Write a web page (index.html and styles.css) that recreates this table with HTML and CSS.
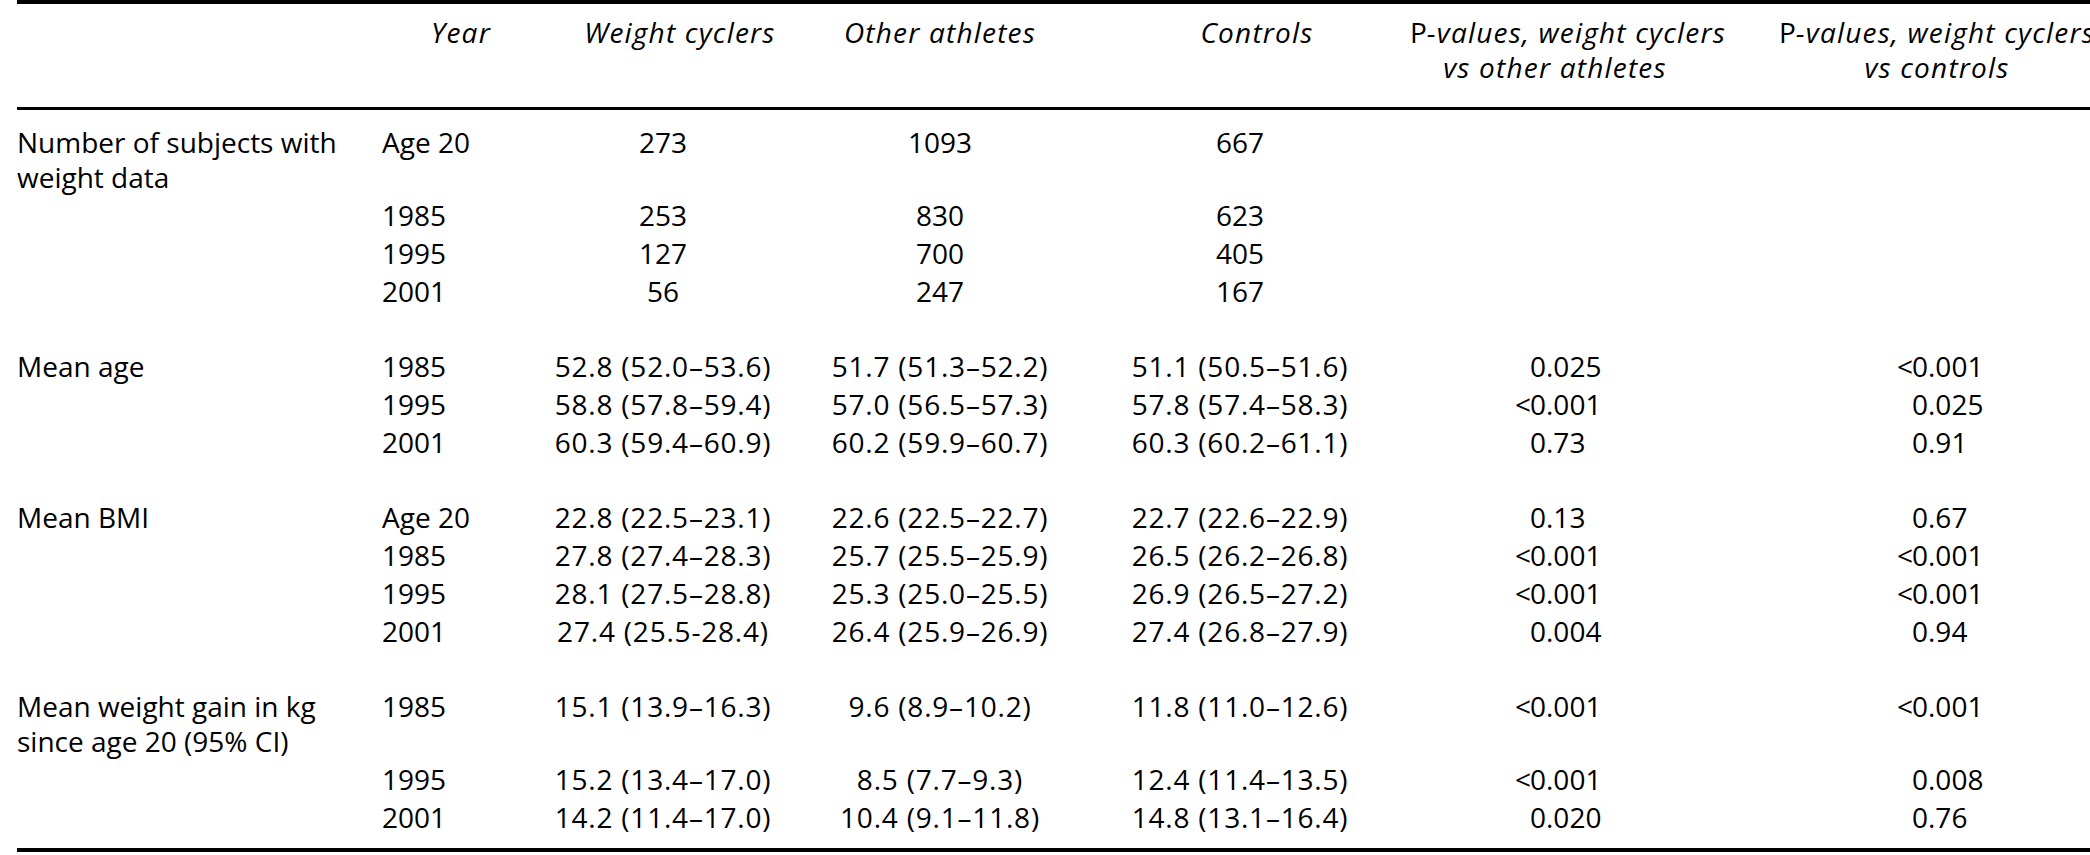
FILE: index.html
```html
<!DOCTYPE html>
<html lang="en">
<head>
<meta charset="utf-8">
<title>Weight cyclers table</title>
<link rel="stylesheet" href="styles.css">
</head>
<body>
<table class="tbl">
  <colgroup>
    <col class="w-label">
    <col class="w-year">
    <col class="w-wc">
    <col class="w-oa">
    <col class="w-ct">
    <col class="w-p5">
    <col class="w-p6">
  </colgroup>
  <thead>
    <tr>
      <th class="h-label"></th>
      <th class="h-c"><i>Year</i></th>
      <th class="h-c"><i>Weight cyclers</i></th>
      <th class="h-c"><i>Other athletes</i></th>
      <th class="h-c h-ct"><i>Controls</i></th>
      <th class="h-c">P<i>-values, weight cyclers</i><br><i>vs other athletes</i></th>
      <th class="h-c h-p6">P<i>-values, weight cyclers</i><br><i>vs controls</i></th>
    </tr>
  </thead>
  <tbody>
    <tr class="first">
      <td class="lab">Number of subjects with weight data</td>
      <td class="yr">Age 20</td><td class="wc">273</td><td class="oa">1093</td><td class="ct">667</td><td class="p5"></td><td class="p6"></td>
    </tr>
    <tr>
      <td class="lab"></td><td class="yr">1985</td><td class="wc">253</td><td class="oa">830</td><td class="ct">623</td><td class="p5"></td><td class="p6"></td>
    </tr>
    <tr>
      <td class="lab"></td><td class="yr">1995</td><td class="wc">127</td><td class="oa">700</td><td class="ct">405</td><td class="p5"></td><td class="p6"></td>
    </tr>
    <tr>
      <td class="lab"></td><td class="yr">2001</td><td class="wc">56</td><td class="oa">247</td><td class="ct">167</td><td class="p5"></td><td class="p6"></td>
    </tr>

    <tr class="grp">
      <td class="lab">Mean age</td>
      <td class="yr">1985</td><td class="wc rng">52.8 (52.0–53.6)</td><td class="oa rng">51.7 (51.3–52.2)</td><td class="ct rng">51.1 (50.5–51.6)</td>
      <td class="p5">0.025</td><td class="p6"><span class="lt">&lt;</span>0.001</td>
    </tr>
    <tr>
      <td class="lab"></td><td class="yr">1995</td><td class="wc rng">58.8 (57.8–59.4)</td><td class="oa rng">57.0 (56.5–57.3)</td><td class="ct rng">57.8 (57.4–58.3)</td>
      <td class="p5"><span class="lt">&lt;</span>0.001</td><td class="p6">0.025</td>
    </tr>
    <tr>
      <td class="lab"></td><td class="yr">2001</td><td class="wc rng">60.3 (59.4–60.9)</td><td class="oa rng">60.2 (59.9–60.7)</td><td class="ct rng">60.3 (60.2–61.1)</td>
      <td class="p5">0.73</td><td class="p6">0.91</td>
    </tr>

    <tr class="grp">
      <td class="lab">Mean BMI</td>
      <td class="yr">Age 20</td><td class="wc rng">22.8 (22.5–23.1)</td><td class="oa rng">22.6 (22.5–22.7)</td><td class="ct rng">22.7 (22.6–22.9)</td>
      <td class="p5">0.13</td><td class="p6">0.67</td>
    </tr>
    <tr>
      <td class="lab"></td><td class="yr">1985</td><td class="wc rng">27.8 (27.4–28.3)</td><td class="oa rng">25.7 (25.5–25.9)</td><td class="ct rng">26.5 (26.2–26.8)</td>
      <td class="p5"><span class="lt">&lt;</span>0.001</td><td class="p6"><span class="lt">&lt;</span>0.001</td>
    </tr>
    <tr>
      <td class="lab"></td><td class="yr">1995</td><td class="wc rng">28.1 (27.5–28.8)</td><td class="oa rng">25.3 (25.0–25.5)</td><td class="ct rng">26.9 (26.5–27.2)</td>
      <td class="p5"><span class="lt">&lt;</span>0.001</td><td class="p6"><span class="lt">&lt;</span>0.001</td>
    </tr>
    <tr>
      <td class="lab"></td><td class="yr">2001</td><td class="wc rng">27.4 (25.5-28.4)</td><td class="oa rng">26.4 (25.9–26.9)</td><td class="ct rng">27.4 (26.8–27.9)</td>
      <td class="p5">0.004</td><td class="p6">0.94</td>
    </tr>

    <tr class="grp">
      <td class="lab">Mean weight gain in kg since age 20 (95% CI)</td>
      <td class="yr">1985</td><td class="wc rng">15.1 (13.9–16.3)</td><td class="oa rng">9.6 (8.9–10.2)</td><td class="ct rng">11.8 (11.0–12.6)</td>
      <td class="p5"><span class="lt">&lt;</span>0.001</td><td class="p6"><span class="lt">&lt;</span>0.001</td>
    </tr>
    <tr>
      <td class="lab"></td><td class="yr">1995</td><td class="wc rng">15.2 (13.4–17.0)</td><td class="oa rng">8.5 (7.7–9.3)</td><td class="ct rng">12.4 (11.4–13.5)</td>
      <td class="p5"><span class="lt">&lt;</span>0.001</td><td class="p6">0.008</td>
    </tr>
    <tr class="last">
      <td class="lab"></td><td class="yr">2001</td><td class="wc rng">14.2 (11.4–17.0)</td><td class="oa rng">10.4 (9.1–11.8)</td><td class="ct rng">14.8 (13.1–16.4)</td>
      <td class="p5">0.020</td><td class="p6">0.76</td>
    </tr>
  </tbody>
</table>
</body>
</html>
```
FILE: styles.css
```css
html, body {
  margin: 0;
  padding: 0;
  background: #ffffff;
  overflow: hidden;
}

.tbl {
  margin-left: 17px;
  border-collapse: separate;
  border-spacing: 0;
  table-layout: fixed;
  width: 2143px;
  font-family: "Open Sans", Lato, "DejaVu Sans", sans-serif;
  font-size: 28px;
  line-height: 35px;
  color: #000000;
}

.w-label { width: 365px; }
.w-year { width: 158px; }
.w-wc { width: 280px; }
.w-oa { width: 240px; }
.w-ct { width: 350px; }
.w-p5 { width: 290px; }
.w-p6 { width: 460px; }

.tbl th {
  font-weight: normal;
  vertical-align: top;
  white-space: nowrap;
  padding: 11px 0 22px 0;
  border-top: 4px solid #000;
  border-bottom: 3px solid #000;
}

.tbl th i { letter-spacing: 1.2px; }

.h-c { text-align: center; }
.tbl th.h-ct { padding-left: 44px; }
.tbl th.h-p6 { padding-left: 14px; }

.tbl td {
  vertical-align: top;
  padding: 3px 0 0 0;
  white-space: nowrap;
}

.tbl td.lab {
  white-space: normal;
  padding-right: 30px;
  text-align: left;
}

.yr { text-align: left; }
.tbl td.wc { text-align: center; padding-right: 34px; }
.tbl td.oa { text-align: center; }
.tbl td.ct { text-align: center; padding-left: 10px; }
.tbl td.rng { letter-spacing: 0.8px; }
.tbl td.p5 { text-align: left; padding-left: 120px; }
.tbl td.p6 { text-align: left; padding-left: 212px; }

.lt {
  display: inline-block;
  width: 15px;
  margin-left: -15px;
  text-align: left;
}

.tbl tr.first td { padding-top: 15px; }
.tbl tr.grp td { padding-top: 40px; }
.tbl tr.last td {
  padding-bottom: 13px;
  border-bottom: 4px solid #000;
}
```
